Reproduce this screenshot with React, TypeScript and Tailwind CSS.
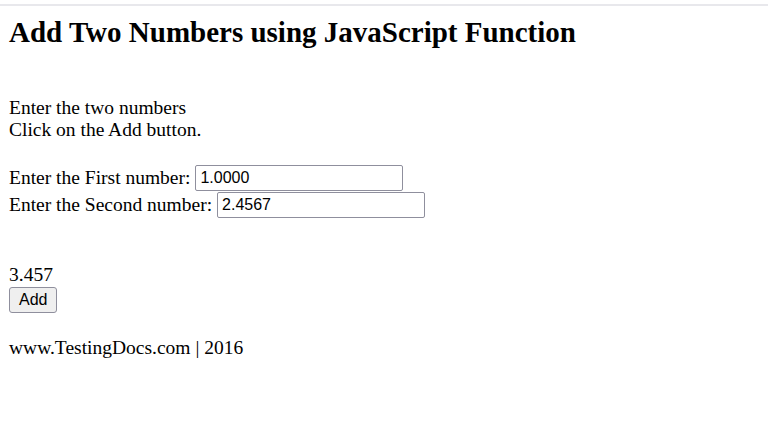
import React from "react";

export default function App() {
  const [a, setA] = React.useState("1.0000");
  const [b, setB] = React.useState("2.4567");
  const [sum, setSum] = React.useState("3.457");

  const onAdd = () => {
    const s = parseFloat(a) + parseFloat(b);
    setSum(Number.isFinite(s) ? String(Math.round(s * 1000) / 1000) : "NaN");
  };

  return (
    <div className="min-h-[441px] bg-white text-black font-['Liberation_Serif',serif]">
      <div className="h-[4px]" />
      <div className="h-[2px] bg-[#e8e8ec]" />
      <div className="px-[9px]">
        <h1 className="mt-[10px] text-[29px] leading-[32px] font-bold">
          Add Two Numbers using JavaScript Function
        </h1>
        <div className="mt-[49px] text-[19.5px] leading-[22px]">
          <div>Enter the two numbers</div>
          <div>Click on the Add button.</div>
        </div>
        <div className="mt-[24px] text-[19.5px] leading-[22px] flex flex-col gap-[1px]">
          <label className="flex items-center gap-[5px]">
            <span>Enter the First number:</span>
            <input
              value={a}
              onChange={(e) => setA(e.target.value)}
              className="w-[208px] h-[26px] border border-[#8f8f9d] rounded-[2px] px-[4px] font-['Liberation_Sans',sans-serif] text-[16px] outline-none"
            />
          </label>
          <label className="flex items-center gap-[5px]">
            <span>Enter the Second number:</span>
            <input
              value={b}
              onChange={(e) => setB(e.target.value)}
              className="w-[208px] h-[26px] border border-[#8f8f9d] rounded-[2px] px-[4px] font-['Liberation_Sans',sans-serif] text-[16px] outline-none"
            />
          </label>
        </div>
        <div className="mt-[46px] text-[19.5px] leading-[22px]">{sum}</div>
        <button
          onClick={onAdd}
          className="mt-[1px] h-[26px] px-[9px] border border-[#8f8f9d] rounded-[3px] bg-[#efefef] font-['Liberation_Sans',sans-serif] text-[16px] leading-[20px]"
        >
          Add
        </button>
        <div className="mt-[24px] text-[19.5px] leading-[22px]">
          www.TestingDocs.com | 2016
        </div>
      </div>
    </div>
  );
}
